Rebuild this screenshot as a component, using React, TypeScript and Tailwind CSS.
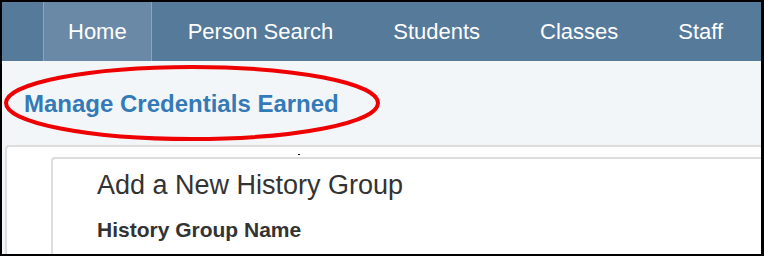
import React from 'react';

const navItems = ['Person Search', 'Students', 'Classes', 'Staff'];

const App: React.FC = () => {
    return (
        <div className="w-[764px] h-[256px] bg-black pt-[2px] pl-[2px] pr-[3px] pb-[2px] font-['Liberation_Sans',Arial,sans-serif]">
            <div className="relative w-full h-full overflow-hidden bg-[#f3f6f8] flex flex-col">
                {/* top nav */}
                <nav className="h-[59px] shrink-0 bg-[#557a9a] flex items-stretch pl-[41px] text-white text-[22px]">
                    <a className="flex items-center px-[24px] bg-[#6989a7] border-l border-r border-[#8aa6be]">Home</a>
                    <div className="flex items-stretch ml-[6px]">
                        {navItems.map((item) => (
                            <a key={item} className="flex items-center px-[30px] whitespace-nowrap">{item}</a>
                        ))}
                    </div>
                </nav>

                <div className="h-[84px] shrink-0 pl-[22px] pt-[29px]">
                    <h1 className="text-[24px] leading-[28px] font-bold text-[#337ab7]">Manage Credentials Earned</h1>
                </div>

                <div className="flex-1 ml-[3px] bg-white border-t-2 border-l-2 border-[#dddddd] rounded-tl-[4px] pt-[10px] pl-[44px]">
                    <div className="h-full bg-white border-t-2 border-l-2 border-[#dddddd] rounded-tl-[4px] pt-[11px] pl-[44px] text-[#333333]">
                        <h2 className="text-[27px] leading-[30px]">Add a New History Group</h2>
                        <div className="mt-[18px] text-[21px] leading-[24px] font-bold">History Group Name</div>
                    </div>
                </div>

                {/* stray dot */}
                <span className="absolute left-[296px] top-[152px] w-[2px] h-[1px] bg-black" />

                {/* red annotation circle */}
                <svg className="absolute left-0 top-0 pointer-events-none" width="759" height="252">
                    <ellipse cx="190" cy="101" rx="186" ry="36" fill="none" stroke="#ee0000" strokeWidth="4" />
                </svg>
            </div>
        </div>
    );
};

export default App;
